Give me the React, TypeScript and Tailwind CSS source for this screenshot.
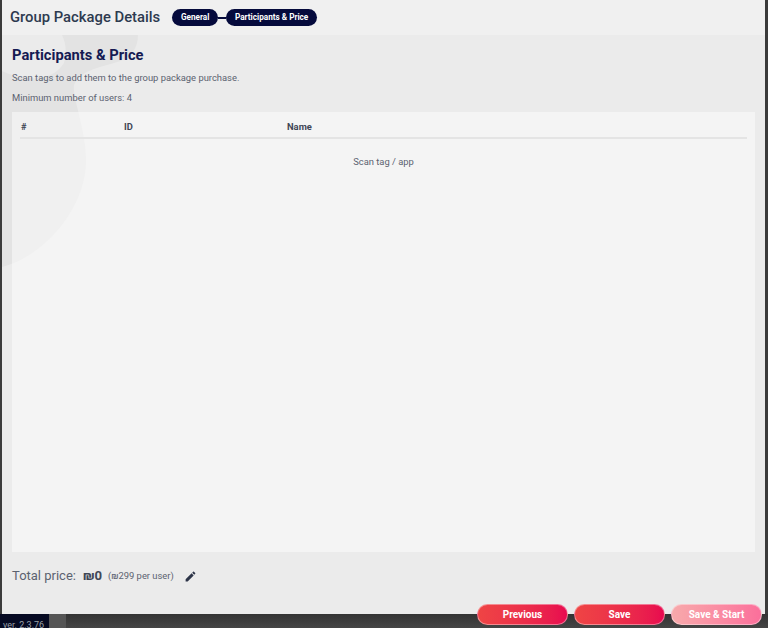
import React from 'react';

const Step = ({ label, className }: { label: string; className: string }) => (
  <div className={`h-[17px] rounded-full bg-[#050a3c] flex items-center justify-center text-white text-[8.2px] font-bold ${className}`}>
    {label}
  </div>
);

const ActionButton = ({ label, className }: { label: string; className: string }) => (
  <button className={`w-[91px] h-[21px] rounded-full border border-[#ffffff66] bg-gradient-to-r text-white text-[10px] font-bold ${className}`}>
    {label}
  </button>
);

export default function App() {
  return (
    <div className="w-[768px] h-[628px] overflow-hidden bg-[#3b3b3b] font-['Roboto',sans-serif] flex flex-col relative">
      <div className="ml-[2px] mr-[3px] h-[614px] shrink-0 flex flex-col bg-[#ebebeb] relative">
        {/* logo watermark behind the content */}
        <svg className="absolute left-0 top-[35px] pointer-events-none" width="145" height="240" viewBox="0 0 145 240" fill="none">
          <path
            d="M0 36 C20 46 50 48 62 28 C65 18 64 8 60 0 H136 C136 14 128 24 112 28 C95 33 78 36 72 50 C70 62 84 95 84 125 C84 175 40 222 0 232 Z"
            fill="#e3e3e3"
          />
        </svg>

        <div className="h-[35px] shrink-0 bg-[#f0f0f0] flex items-center pl-[8px] relative">
          <h1 className="text-[14.8px] font-medium text-[#2d3a4f]">Group Package Details</h1>
          <div className="flex items-center ml-[12px]">
            <Step label="General" className="w-[46px]" />
            <div className="w-[8px] h-[2px] bg-[#050a3c]" />
            <Step label="Participants & Price" className="w-[91px]" />
          </div>
        </div>

        <div className="flex-1 flex flex-col min-h-0 px-[10px] relative">
          <h2 className="mt-[10px] text-[14.7px] leading-[20px] font-bold text-[#151a52]">Participants &amp; Price</h2>
          <p className="mt-[6px] text-[9.4px] leading-[14px] text-[#5b6270]">Scan tags to add them to the group package purchase.</p>
          <p className="mt-[6px] text-[9.4px] leading-[14px] text-[#5b6270]">Minimum number of users: 4</p>

          <div className="mt-[7px] h-[440px] shrink-0 bg-[#ffffff73] px-[8px]">
            <div className="h-[27px] pt-[6px] pl-[1px] grid grid-cols-[103px_163px_1fr] items-center border-b-2 border-[#e4e4e4] text-[9.4px] font-bold text-[#3f4656]">
              <span>#</span>
              <span>ID</span>
              <span>Name</span>
            </div>
            <div className="mt-[16px] text-center text-[9.4px] leading-[14px] text-[#5b6270]">Scan tag / app</div>
          </div>

          <div className="mt-[15px] flex items-center text-[#5b6270]">
            <span className="text-[13px] leading-[18px]">Total price:</span>
            <span className="ml-[7px] text-[13.2px] leading-[18px] font-bold text-[#3f4656]">₪0</span>
            <span className="ml-[6px] text-[9.4px] leading-[18px]">(₪299 per user)</span>
            <svg className="ml-[10px] text-[#2d3448]" width="13" height="13" viewBox="0 0 24 24" fill="currentColor">
              <path d="M3 17.25V21h3.75L17.81 9.94l-3.75-3.75L3 17.25zM20.71 7.04c.39-.39.39-1.02 0-1.41l-2.34-2.34c-.39-.39-1.02-.39-1.41 0l-1.83 1.83 3.75 3.75 1.83-1.83z" />
            </svg>
          </div>
        </div>
      </div>

      <div className="flex-1 flex bg-gradient-to-b from-[#333333] to-[#4a4a4a]">
        <div className="w-[49px] bg-[#060a22] text-[#9aa0a8] text-[9px] leading-[14px] pl-[3px] pt-[4px] whitespace-nowrap overflow-hidden">ver. 2.3.76</div>
        <div className="w-[17px] bg-[#555555]" />
      </div>

      <div className="absolute left-[477px] top-[604px] flex gap-[6px]">
        <ActionButton label="Previous" className="from-[#ef4444] to-[#e8084f]" />
        <ActionButton label="Save" className="from-[#ef4444] to-[#e8084f]" />
        <ActionButton label="Save & Start" className="from-[#f7a9ab] to-[#fb6f9b]" />
      </div>
    </div>
  );
}
